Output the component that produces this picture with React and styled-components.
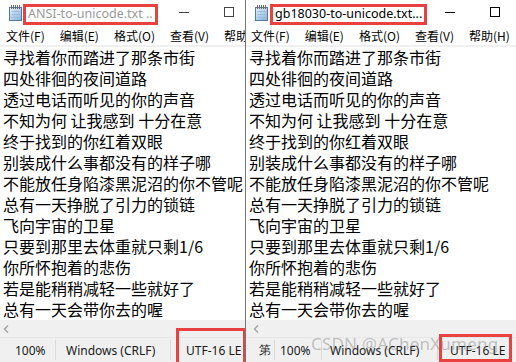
import React from "react";
import styled, { createGlobalStyle } from "styled-components";

const GlobalStyle = createGlobalStyle`
  html, body { margin: 0; padding: 0; background: #fff; overflow: hidden; }
  * { box-sizing: border-box; }
`;

const Desktop = styled.div`
  position: relative;
  display: flex;
  width: 516px;
  height: 362px;
  overflow: hidden;
  background: #fff;
`;

const Clip = styled.div`
  flex: none;
  width: ${p => p.$w}px;
  height: 100%;
  overflow: hidden;
`;

const Window = styled.div`
  flex: none;
  width: ${p => p.$w}px;
  height: 100%;
  display: flex;
  flex-direction: column;
  background: #fff;
  border-left: ${p => (p.$edge ? "1px solid #767676" : "none")};
`;

const TitleBar = styled.div`
  height: 26px;
  flex: none;
  display: flex;
  align-items: flex-start;
  background: #fff;
`;

const AppIcon = styled.svg`
  flex: none;
  width: 15px;
  height: 17px;
  margin: 4px 0 0 8px;
`;

const TitleText = styled.div`
  flex: none;
  height: 21px;
  margin: 4px 0 0 ${p => p.$gap}px;
  padding: 0 2px 0 2px;
  border: 3px solid #e8413f;
  font-family: "Noto Sans", "Segoe UI", sans-serif;
  font-size: 12.5px;
  line-height: 14px;
  white-space: nowrap;
  color: ${p => (p.$active ? "#000" : "#9a9a9a")};
`;

const Spacer = styled.div`
  flex: 1;
`;

const CaptionButton = styled.div`
  flex: none;
  width: 45px;
  height: 24px;
  display: flex;
  align-items: center;
  justify-content: center;
`;

const MinGlyph = styled.div`
  width: 10px;
  height: 1px;
  margin-top: 1px;
  background: ${p => (p.$active ? "#000" : "#444")};
`;

const MaxGlyph = styled.div`
  width: 10px;
  height: 10px;
  margin-bottom: 1px;
  border: 1px solid ${p => (p.$active ? "#000" : "#444")};
`;

const MenuBar = styled.div`
  height: 21px;
  flex: none;
  display: flex;
  align-items: center;
  padding-left: ${p => p.$pad}px;
  border-bottom: 2px solid #f0f0f0;
  font-family: "Noto Sans CJK SC", "Noto Sans", sans-serif;
  font-size: 12px;
  color: #000;
`;

const MenuItem = styled.span`
  padding: 0 7.5px;
  white-space: nowrap;
  &:first-child { padding-left: 0; }
`;

const TextArea = styled.div`
  flex: 1;
  overflow: hidden;
  padding: 0 0 0 ${p => p.$pad}px;
  font-family: "Noto Sans CJK SC", sans-serif;
  font-size: 16px;
  line-height: 21px;
  color: #000;
  white-space: nowrap;
`;

const Line = styled.div`
  height: 21px;
`;

const HScroll = styled.div`
  height: 17px;
  flex: none;
  display: flex;
  align-items: center;
  padding-left: ${p => p.$pad}px;
  background: #f0f0f0;
`;

const StatusBar = styled.div`
  height: 25px;
  flex: none;
  display: flex;
  align-items: stretch;
  background: #f0f0f0;
  border-top: 1px solid #e6e6e6;
  font-family: "Noto Sans", "Segoe UI", sans-serif;
  font-size: 12px;
  color: #1a1a1a;
`;

const StatusCell = styled.div`
  position: relative;
  flex: none;
  width: ${p => (p.$w ? `${p.$w}px` : "auto")};
  display: flex;
  align-items: center;
  padding-left: ${p => p.$pad}px;
  border-left: ${p => (p.$sep ? "1px solid #d9d9d9" : "none")};
  margin: 2px 0;
  white-space: nowrap;
`;

const Mark = styled.div`
  position: absolute;
  left: ${p => p.$left}px;
  top: ${p => p.$top}px;
  width: ${p => p.$w}px;
  height: ${p => p.$h}px;
  border: 3px solid #e8413f;
  pointer-events: none;
`;

const Watermark = styled.div`
  position: absolute;
  left: 311px;
  top: 332px;
  font-family: "Noto Sans", sans-serif;
  font-size: 17px;
  letter-spacing: 0.2px;
  color: rgba(120, 120, 120, 0.42);
  white-space: nowrap;
  pointer-events: none;
`;

const lyrics = [
  "寻找着你而踏进了那条市街",
  "四处徘徊的夜间道路",
  "透过电话而听见的你的声音",
  "不知为何 让我感到 十分在意",
  "终于找到的你红着双眼",
  "别装成什么事都没有的样子哪",
  "不能放任身陷漆黑泥沼的你不管呢",
  "总有一天挣脱了引力的锁链",
  "飞向宇宙的卫星",
  "只要到那里去体重就只剩1/6",
  "你所怀抱着的悲伤",
  "若是能稍稍减轻一些就好了",
  "总有一天会带你去的喔",
];

const NotepadIcon = () => (
  <AppIcon viewBox="0 0 15 17">
    <defs>
      <linearGradient id="pad" x1="0" y1="0" x2="1" y2="1">
        <stop offset="0" stopColor="#e4f1fb" />
        <stop offset="1" stopColor="#86b1d8" />
      </linearGradient>
    </defs>
    <rect x="1.5" y="3.5" width="12" height="13" fill="url(#pad)" stroke="#56799f" />
    <line x1="3.5" y1="7.5" x2="11.5" y2="7.5" stroke="#9dbbd8" />
    <line x1="3.5" y1="10.5" x2="11.5" y2="10.5" stroke="#9dbbd8" />
    <line x1="3.5" y1="13.5" x2="11.5" y2="13.5" stroke="#9dbbd8" />
    {[3, 5, 7, 9, 11].map(x => (
      <rect key={x} x={x} y="1" width="1" height="4" fill="#6d6d6d" />
    ))}
  </AppIcon>
);

const Chevron = () => (
  <svg width="6" height="8" viewBox="0 0 6 8">
    <path d="M5 0.5 L1.5 4 L5 7.5" fill="none" stroke="#a3a3a3" strokeWidth="1.4" />
  </svg>
);

const menus = ["文件(F)", "编辑(E)", "格式(O)", "查看(V)", "帮助(H)"];

function Notepad({ title, active, titleGap, menuPad, textPad, scrollPad, status }) {
  return (
    <>
      <TitleBar>
        <NotepadIcon />
        <TitleText $active={active} $gap={titleGap}>{title}</TitleText>
        <Spacer />
        <CaptionButton><MinGlyph $active={active} /></CaptionButton>
        <CaptionButton><MaxGlyph $active={active} /></CaptionButton>
        <CaptionButton />
      </TitleBar>
      <MenuBar $pad={menuPad}>
        {menus.map(m => <MenuItem key={m}>{m}</MenuItem>)}
      </MenuBar>
      <TextArea $pad={textPad}>
        {lyrics.map((l, i) => <Line key={i}>{l}</Line>)}
      </TextArea>
      <HScroll $pad={scrollPad}>
        <Chevron />
      </HScroll>
      <StatusBar>{status}</StatusBar>
    </>
  );
}

export default function App() {
  return (
    <Desktop>
      <GlobalStyle />
      <Clip $w={245}>
        <Window $w={296}>
          <Notepad
            title="ANSI-to-unicode.txt .."
            active={false}
            titleGap={0}
            menuPad={6}
            textPad={3}
            scrollPad={3}
            status={
              <>
                <StatusCell $w={55} $pad={15}>100%</StatusCell>
                <StatusCell $w={115} $pad={10} $sep>Windows (CRLF)</StatusCell>
                <StatusCell $pad={15} $sep>
                  UTF-16 LE
                  <Mark $left={5} $top={-12} $w={70} $h={40} />
                </StatusCell>
              </>
            }
          />
        </Window>
      </Clip>
      <Window $w={314} $edge>
        <Notepad
          title="gb18030-to-unicode.txt..."
          active
          titleGap={1}
          menuPad={5}
          textPad={3}
          scrollPad={7}
          status={
            <>
              <StatusCell $w={28} $pad={13}>第</StatusCell>
              <StatusCell $w={47} $pad={5} $sep>100%</StatusCell>
              <StatusCell $w={116} $pad={8} $sep>Windows (CRLF)</StatusCell>
              <StatusCell $pad={12} $sep>
                UTF-16 LE
                <Mark $left={1} $top={-6} $w={73} $h={28} />
              </StatusCell>
            </>
          }
        />
      </Window>
      <Watermark>CSDN @AChenXumeng</Watermark>
    </Desktop>
  );
}
